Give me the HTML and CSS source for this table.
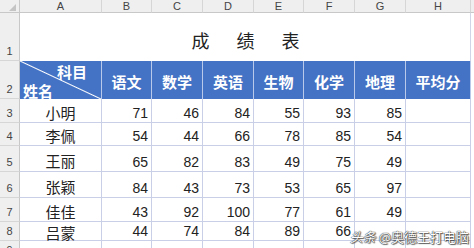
FILE: index.html
```html
<!DOCTYPE html>
<html lang="zh">
<head>
<meta charset="utf-8">
<title>成绩表</title>
<link rel="stylesheet" href="styles.css">
</head>
<body>
<div class="sheet">
  <div class="corner"><span class="tri"></span></div>
  <div class="ch">A</div><div class="ch">B</div><div class="ch">C</div><div class="ch">D</div>
  <div class="ch">E</div><div class="ch">F</div><div class="ch">G</div><div class="ch">H</div><div class="ch end"></div>

  <div class="rh">1</div>
  <div class="title"><span>成</span><span>绩</span><span>表</span></div>
  <div class="blank"></div>

  <div class="rh">2</div>
  <div class="hd diag"><span class="tr">科目</span><span class="bl">姓名</span></div>
  <div class="hd">语文</div><div class="hd">数学</div><div class="hd">英语</div><div class="hd">生物</div>
  <div class="hd">化学</div><div class="hd">地理</div><div class="hd">平均分</div>
  <div class="blank"></div>

  <div class="rh">3</div>
  <div class="name">小明</div><div class="num">71</div><div class="num">46</div><div class="num">84</div><div class="num">55</div><div class="num">93</div><div class="num">85</div><div class="num"></div><div class="blank"></div>

  <div class="rh">4</div>
  <div class="name">李佩</div><div class="num">54</div><div class="num">44</div><div class="num">66</div><div class="num">78</div><div class="num">85</div><div class="num">54</div><div class="num"></div><div class="blank"></div>

  <div class="rh">5</div>
  <div class="name">王丽</div><div class="num">65</div><div class="num">82</div><div class="num">83</div><div class="num">49</div><div class="num">75</div><div class="num">49</div><div class="num"></div><div class="blank"></div>

  <div class="rh">6</div>
  <div class="name">张颖</div><div class="num">84</div><div class="num">43</div><div class="num">73</div><div class="num">53</div><div class="num">65</div><div class="num">97</div><div class="num"></div><div class="blank"></div>

  <div class="rh">7</div>
  <div class="name">佳佳</div><div class="num">43</div><div class="num">92</div><div class="num">100</div><div class="num">77</div><div class="num">61</div><div class="num">49</div><div class="num"></div><div class="blank"></div>

  <div class="rh">8</div>
  <div class="name">吕蒙</div><div class="num">44</div><div class="num">74</div><div class="num">84</div><div class="num">89</div><div class="num">66</div><div class="num"></div><div class="num"></div><div class="blank"></div>

  <div class="rh">9</div>
  <div class="cell"></div><div class="cell"></div><div class="cell"></div><div class="cell"></div><div class="cell"></div><div class="cell"></div><div class="cell"></div><div class="cell"></div><div class="blank"></div>
</div>
<div class="watermark"><span class="brand">头条</span> @奥德王打电脑</div>
</body>
</html>
```

FILE: styles.css
```css
html, body {
  margin: 0;
  padding: 0;
  background: #fff;
  overflow: hidden;
}
body {
  width: 474px;
  height: 248px;
  position: relative;
  font-family: "Liberation Sans", Arial, "Noto Sans CJK SC", sans-serif;
}
.sheet {
  display: grid;
  grid-template-columns: 20px 82px 50px 51px 51px 50px 51px 51px 65px 1fr;
  grid-template-rows: 13px 48px 38px 24px 23px 26px 26px 24px 19px 7px;
  height: 248px;
  overflow: hidden;
}
.sheet > div {
  box-sizing: border-box;
}
.corner {
  background: #efefef;
  border-right: 1px solid #c8c8c8;
  border-bottom: 1px solid #c8c8c8;
  position: relative;
}
.tri {
  position: absolute;
  right: 3px;
  bottom: 1px;
  width: 0;
  height: 0;
  border-left: 7px solid transparent;
  border-bottom: 7px solid #c4c4c4;
}
.ch {
  background: #efefef;
  border-right: 1px solid #d6d6d6;
  border-bottom: 1px solid #c8c8c8;
  font-size: 11px;
  line-height: 12px;
  color: #444;
  text-align: center;
}
.ch.end {
  border-right: none;
}
.rh {
  background: #efefef;
  border-right: 1px solid #c8c8c8;
  border-bottom: 1px solid #d6d6d6;
  font-size: 11px;
  line-height: 13px;
  color: #444;
  display: flex;
  align-items: flex-end;
  justify-content: center;
  padding-bottom: 2px;
}
.rh:nth-last-child(10) {
  align-items: flex-start;
  padding: 3px 0 0;
  overflow: hidden;
  border-bottom: none;
}
.title {
  grid-column: 2 / span 8;
  border-right: 1px solid #d0d5e8;
  display: flex;
  justify-content: center;
  align-items: center;
  gap: 27px;
  padding-top: 6px;
  padding-left: 1px;
  font-family: "Noto Sans CJK SC", sans-serif;
  font-size: 18px;
  color: #222;
}
.blank {
  background: #fff;
}
.hd {
  background: #4472c4;
  border-right: 1px solid #b9c9ea;
  color: #fff;
  font-family: "Noto Sans CJK SC", sans-serif;
  font-weight: bold;
  font-size: 15px;
  display: flex;
  align-items: center;
  justify-content: center;
  padding-top: 2px;
}
.hd.diag {
  background: linear-gradient(to top right, #4472c4 calc(50% - 1px), #fff 50%, #4472c4 calc(50% + 1px));
  flex-direction: column;
  align-items: stretch;
  justify-content: space-between;
  padding: 3px 14px 0 3px;
  line-height: 16px;
}
.tr {
  align-self: flex-end;
}
.bl {
  align-self: flex-start;
}
.name, .num, .cell {
  border-right: 1px solid #c9cfe6;
  border-bottom: 1px solid #c9cfe6;
  color: #222;
}
.cell {
  border-bottom: none;
}
.name {
  font-family: "Noto Sans CJK SC", sans-serif;
  font-size: 15px;
  display: flex;
  align-items: center;
  justify-content: center;
  padding-top: 3px;
}
.num {
  font-size: 14px;
  display: flex;
  align-items: flex-end;
  justify-content: flex-end;
  padding: 0 3px 1px 0;
  line-height: 16px;
}
.watermark {
  position: absolute;
  right: 5px;
  bottom: 4px;
  font-family: "Noto Sans CJK SC", sans-serif;
  font-size: 13px;
  line-height: 15px;
  color: #fff;
  text-shadow: 0 0 1px #222, 0 0 1px #222, 1px 1px 1px rgba(0,0,0,0.6);
  white-space: nowrap;
}
.brand {
  font-style: italic;
}
```
